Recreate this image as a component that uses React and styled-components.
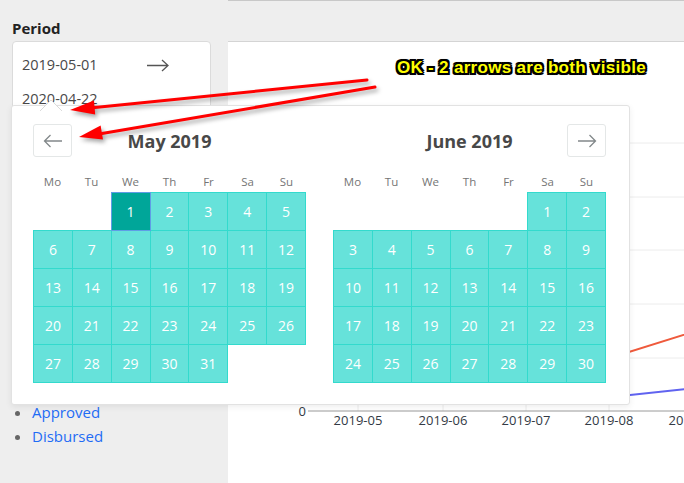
import React from 'react';
import styled, { createGlobalStyle } from 'styled-components';

const GlobalStyle = createGlobalStyle`
  html, body {
    margin: 0;
    padding: 0;
  }
  body {
    background: #eeeeee;
    font-family: 'Open Sans', 'Noto Sans', sans-serif;
    color: #333;
  }
`;

const Page = styled.div`
  position: relative;
  display: grid;
  grid-template-columns: 228px 1fr;
  width: 684px;
  height: 483px;
  overflow: hidden;
`;

const Sidebar = styled.aside`
  position: relative;
  z-index: 2;
  padding: 18px 17px 0 12px;
`;

const FilterTitle = styled.div`
  margin-top: ${props => props.$gap || 0}px;
  margin-bottom: 3px;
  font-size: 15px;
  font-weight: 700;
  line-height: 20px;
  color: #222;
`;

const PickerWrap = styled.div`
  position: relative;
`;

const DateBox = styled.div`
  display: flex;
  flex-wrap: wrap;
  width: 199px;
  box-sizing: border-box;
  padding: 6px 0;
  background: #fff;
  border: 1px solid #dbdbdb;
  border-radius: 4px;
`;

const DateField = styled.div`
  width: 130px;
  height: 34px;
  box-sizing: border-box;
  padding-left: 9px;
  line-height: 34px;
  font-size: 14.5px;
  color: #484848;
`;

const ArrowCell = styled.div`
  width: 30px;
  height: 34px;
  display: flex;
  align-items: center;
  justify-content: center;
`;

const SelectBox = styled.div`
  height: 36px;
  box-sizing: border-box;
  padding: 0 10px;
  line-height: 34px;
  font-size: 14px;
  color: #484848;
  background: #fff;
  border: 1px solid #dbdbdb;
  border-radius: 4px;
`;

const StatusList = styled.ul`
  margin: 18px 0 0;
  padding-left: 20px;
  color: #666;
  font-size: 15px;
  line-height: 24px;
`;

const StatusLink = styled.a`
  color: #1f6cf5;
  text-decoration: none;
`;

const Popup = styled.div`
  position: absolute;
  left: -1px;
  top: 64px;
  z-index: 10;
  display: flex;
  gap: 27px;
  width: 619px;
  height: 300px;
  box-sizing: border-box;
  padding: 18px 23px 0 21px;
  background: #fff;
  border: 1px solid #e2e2e2;
  border-radius: 3px;
  box-shadow: 0 2px 6px rgba(0, 0, 0, 0.07);
`;

const Fang = styled.svg`
  position: absolute;
  left: 28px;
  top: -6px;
`;

const Month = styled.div`
  width: 273px;
`;

const MonthHeader = styled.div`
  display: grid;
  grid-template-columns: 39px 1fr 39px;
  align-items: center;
  height: 33px;
`;

const MonthTitle = styled.div`
  grid-column: 2;
  grid-row: 1;
  text-align: center;
  font-size: 18px;
  font-weight: 700;
  color: #484848;
`;

const NavButton = styled.button`
  grid-column: ${props => (props.$side === 'left' ? 1 : 3)};
  grid-row: 1;
  display: flex;
  align-items: center;
  justify-content: center;
  width: 39px;
  height: 33px;
  box-sizing: border-box;
  padding: 0;
  background: #fff;
  border: 1px solid #e4e7e7;
  border-radius: 3px;
`;

const Weekdays = styled.div`
  display: grid;
  grid-template-columns: repeat(7, 39px);
  align-items: center;
  height: 22px;
  margin-top: 13px;
  text-align: center;
  font-size: 11.5px;
  color: #757575;
`;

const DayTable = styled.table`
  border-collapse: collapse;
  table-layout: fixed;
`;

const Day = styled.td`
  width: 38px;
  height: 37px;
  padding: 0;
  text-align: center;
  vertical-align: middle;
  font-size: 14px;
  color: #fff;
  background: ${props => (props.$empty ? 'transparent' : props.$selected ? '#00a699' : '#66e2da')};
  border: ${props => (props.$empty ? 'none' : `1px solid ${props.$selected ? '#5f9de6' : '#33dacd'}`)};
`;

const Main = styled.main`
  display: flex;
  flex-direction: column;
  border-top: 1px solid #c8c8c8;
`;

const Toolbar = styled.div`
  height: 40px;
`;

const ChartPanel = styled.section`
  flex: 1;
  background: #fff;
  border-top: 1px solid #d4d4d4;
`;

const Overlay = styled.svg`
  position: absolute;
  left: 0;
  top: 0;
  z-index: 20;
  pointer-events: none;
  filter: drop-shadow(2px 3px 2px rgba(0, 0, 0, 0.35));
`;

const Note = styled.div`
  position: absolute;
  left: 397px;
  top: 58px;
  z-index: 21;
  font-family: 'Liberation Sans', Arial, sans-serif;
  font-size: 17px;
  font-weight: 700;
  line-height: 20px;
  letter-spacing: 0.3px;
  color: #ffff00;
  white-space: nowrap;
  text-shadow: -2px -2px 0 #000, 2px -2px 0 #000, -2px 2px 0 #000, 2px 2px 0 #000,
    0 2px 0 #000, 0 -2px 0 #000, 2px 0 0 #000, -2px 0 0 #000, 0 0 3px #000;
`;

const WEEKDAYS = ['Mo', 'Tu', 'We', 'Th', 'Fr', 'Sa', 'Su'];

// offset = index of the 1st in a Monday-first week
const buildWeeks = (offset, days) => {
  const cells = [];
  for (let i = 0; i < offset; i++) cells.push(null);
  for (let d = 1; d <= days; d++) cells.push(d);
  while (cells.length % 7) cells.push(null);
  const weeks = [];
  for (let i = 0; i < cells.length; i += 7) weeks.push(cells.slice(i, i + 7));
  return weeks;
};

const MONTHS = [
  { title: 'May 2019', weeks: buildWeeks(2, 31), nav: 'left', selected: 1 },
  { title: 'June 2019', weeks: buildWeeks(5, 30), nav: 'right' },
];

const NavArrow = ({ dir }) => (
  <svg width="20" height="14" viewBox="0 0 20 14">
    <g fill="none" stroke="#82888a" strokeWidth="1.3">
      {dir === 'left' ? (
        <path d="M19 7H1.5M7.5 1L1.5 7l6 6" />
      ) : (
        <path d="M1 7h17.5M12.5 1l6 6-6 6" />
      )}
    </g>
  </svg>
);

const RangeArrow = () => (
  <svg width="24" height="13" viewBox="0 0 24 13">
    <path d="M1 6.5h21M16 1l6 5.5-6 5.5" fill="none" stroke="#555" strokeWidth="1.3" />
  </svg>
);

const Chart = () => {
  const xs = [130, 215, 298, 381, 465];
  const labels = ['2019-05', '2019-06', '2019-07', '2019-08', '2019-09'];
  const rows = [101, 155, 208, 262, 316];
  const red = [340, 332, 325, 316.3, 289.9];
  const blue = [352, 354, 356, 355.2, 346.4];
  const pts = ys => ys.map((y, i) => `${xs[i]},${y}`).join(' ');

  return (
    <svg width="456" height="441" style={{ display: 'block' }}>
      <g stroke="#ececec" strokeWidth="1">
        {rows.map(y => <line key={y} x1="80" x2="456" y1={y} y2={y} />)}
        {xs.map(x => <line key={x} x1={x} x2={x} y1="101" y2="369" />)}
      </g>
      <line x1="80" x2="456" y1="369" y2="369" stroke="#9a9a9a" />
      <text x="78" y="374" textAnchor="end" fontSize="13" fill="#333a45" fontFamily="Open Sans">0</text>
      {labels.map((l, i) => (
        <text key={l} x={xs[i]} y="383" textAnchor="middle" fontSize="13" fill="#333a45" fontFamily="Open Sans">
          {l}
        </text>
      ))}
      <polyline points={pts(red)} fill="none" stroke="#ef5a3c" strokeWidth="2" />
      <polyline points={pts(blue)} fill="none" stroke="#6063f0" strokeWidth="2" />
    </svg>
  );
};

const App = () => (
  <>
    <GlobalStyle />
    <Page>
      <Sidebar>
        <FilterTitle>Period</FilterTitle>
        <PickerWrap>
          <DateBox>
            <DateField>2019-05-01</DateField>
            <ArrowCell><RangeArrow /></ArrowCell>
            <DateField>2020-04-22</DateField>
          </DateBox>

          <Popup>
            <Fang width="22" height="11" viewBox="0 0 22 11">
              <path d="M0 11L11 0l11 11" fill="#fff" stroke="#dadada" />
            </Fang>
            {MONTHS.map(month => (
              <Month key={month.title}>
                <MonthHeader>
                  <NavButton $side={month.nav}><NavArrow dir={month.nav} /></NavButton>
                  <MonthTitle>{month.title}</MonthTitle>
                </MonthHeader>
                <Weekdays>
                  {WEEKDAYS.map(w => <span key={w}>{w}</span>)}
                </Weekdays>
                <DayTable>
                  <tbody>
                    {month.weeks.map((week, wi) => (
                      <tr key={wi}>
                        {week.map((d, di) => (
                          <Day key={di} $empty={!d} $selected={d && d === month.selected}>
                            {d}
                          </Day>
                        ))}
                      </tr>
                    ))}
                  </tbody>
                </DayTable>
              </Month>
            ))}
          </Popup>
        </PickerWrap>

        <FilterTitle $gap={18}>Branch</FilterTitle>
        <SelectBox>All branches</SelectBox>

        <FilterTitle $gap={18}>Status</FilterTitle>
        <StatusList>
          {['Draft', 'Submitted', 'In review', 'Pending', 'Rejected', 'Returned', 'Approved', 'Disbursed'].map(s => (
            <li key={s}><StatusLink href="#">{s}</StatusLink></li>
          ))}
        </StatusList>
      </Sidebar>

      <Main>
        <Toolbar />
        <ChartPanel>
          <Chart />
        </ChartPanel>
      </Main>

      <Overlay width="684" height="483" viewBox="0 0 684 483">
        <g stroke="#ff0000" strokeWidth="3" strokeLinecap="round">
          <line x1="367" y1="80" x2="90" y2="108" />
          <line x1="375" y1="87" x2="99" y2="134" />
        </g>
        <g fill="#ff0000">
          <polygon points="70,110 94,100.6 95.2,114.4" />
          <polygon points="79,137 100.6,125.6 103,139.4" />
        </g>
      </Overlay>
      <Note>OK - 2 arrows are both visible</Note>
    </Page>
  </>
);

export default App;
